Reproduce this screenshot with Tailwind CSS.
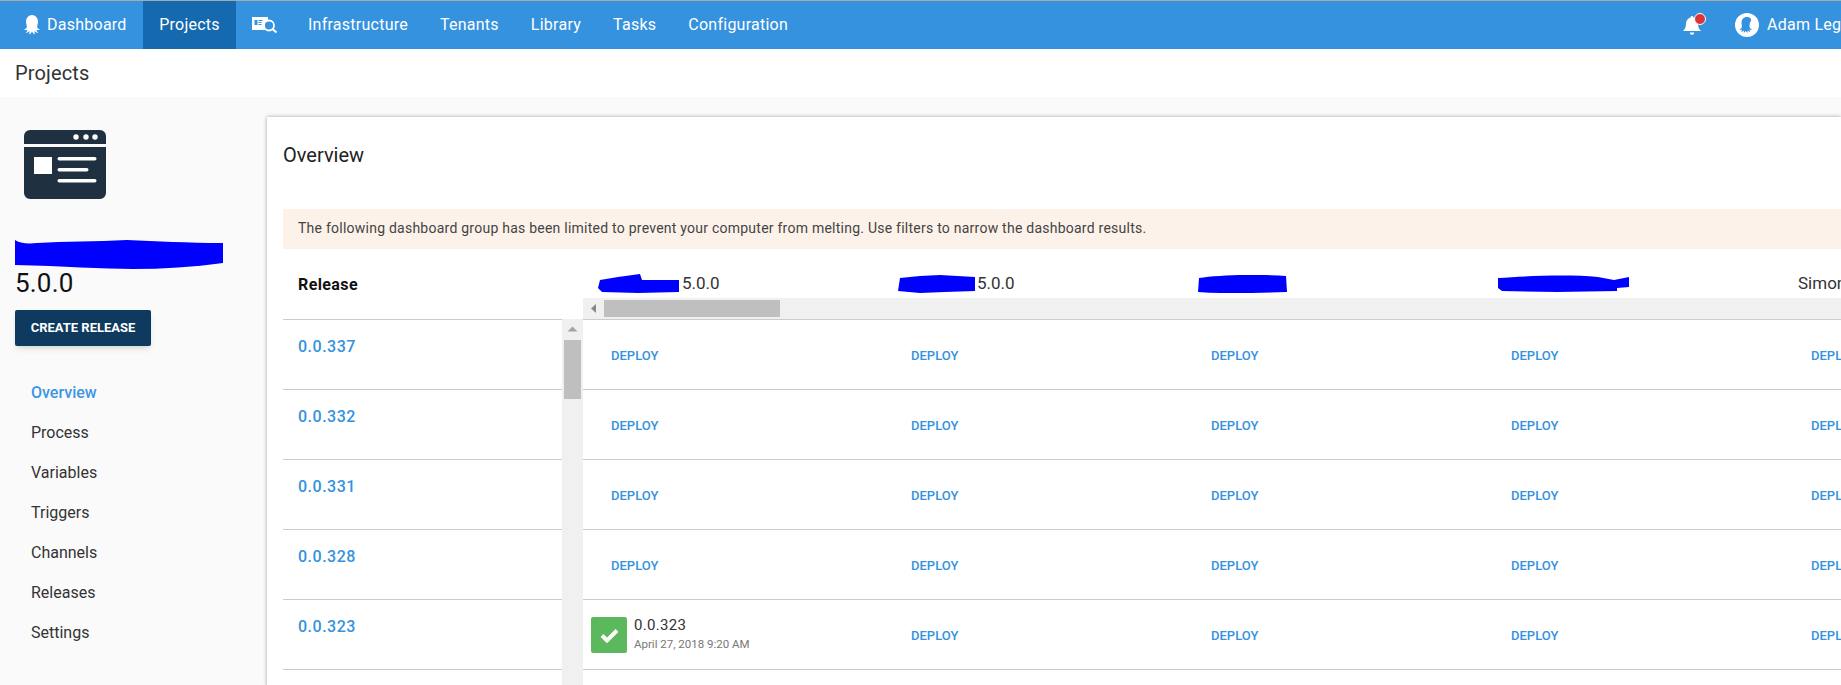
<!DOCTYPE html>
<html lang="en">
<head>
    <meta charset="UTF-8">
    <title>Projects</title>
    <script src="https://cdn.jsdelivr.net/npm/@tailwindcss/browser@4"></script>
</head>
<body class="w-[1841px] h-[685px] overflow-hidden bg-[#fafafa] font-['Roboto',sans-serif] text-[#333333]">

    <!-- Top nav -->
    <div class="h-px bg-[#a9a9a9]"></div>
    <nav class="h-12 bg-[#3592de] flex items-stretch text-white text-[16px] tracking-[0.25px] whitespace-nowrap">
        <a class="w-[143px] flex items-center pl-[24px]">
            <svg class="w-[16px] h-[20px] mr-[7px]" viewBox="0 0 16 20" fill="#fff"><path d="M8 0a6.200 6.200 0 0 0-6 6.500c0 2.300 1 3.800.8 5.500C2.600 13.400 1 14.300 0 14.500c1 .8 2.500.6 3.500 0-.2 1.300-1 2.800-1.700 3.500 1.300.1 2.800-.8 3.500-2.200.2 1.300.2 2.500-.3 3.700 1.100-.3 2.400-1.600 3-3 .6 1.400 1.900 2.700 3 3-.5-1.200-.5-2.400-.3-3.700.7 1.400 2.200 2.300 3.500 2.200-.7-.7-1.500-2.200-1.700-3.500 1 .6 2.500.8 3.500 0-1-.2-2.600-1.100-2.800-2.500-.2-1.700.8-3.200.8-5.500A6.200 6.200 0 0 0 8 0z"/></svg>
            Dashboard
        </a>
        <a class="w-[93px] flex items-center justify-center bg-[#1569ae]">Projects</a>
        <a class="w-[72px] flex items-center pl-[16px]">
            <svg class="w-[26px] h-[18px]" viewBox="0 0 26 18">
                <rect x="0" y="1" width="16" height="13" fill="#fff"/>
                <rect x="2.500" y="4" width="3" height="5" fill="#3592de"/>
                <path d="M6.500 4.500h4M6.500 6.500h3M6.500 8.500h3" stroke="#3592de" stroke-width="1.200"/>
                <circle cx="17" cy="9.500" r="5" fill="#3592de" stroke="#fff" stroke-width="1.800"/>
                <path d="M20.500 13l4 3.500" stroke="#fff" stroke-width="2.200"/>
            </svg>
        </a>
        <a class="flex items-center mr-[32px]">Infrastructure</a>
        <a class="flex items-center mr-[32px]">Tenants</a>
        <a class="flex items-center mr-[32px]">Library</a>
        <a class="flex items-center mr-[32px]">Tasks</a>
        <a class="flex items-center">Configuration</a>
        <div class="ml-auto flex items-center shrink-0">
            <div class="relative w-[20px] h-[24px] mr-[32px]">
                <svg class="w-[18px] h-[20px] absolute left-0 top-[3px]" viewBox="0 0 18 20" fill="#fff"><path d="M9 0a1.500 1.500 0 0 1 1.500 1.600C13 2.300 15 4.700 15 7.500c0 3.500.8 5.300 3 7.500H0c2.200-2.200 3-4 3-7.500 0-2.800 2-5.200 4.500-5.900A1.500 1.500 0 0 1 9 0zM6.800 16.500h4.400C11 18 10.100 18.800 9 18.800S7 18 6.800 16.500z"/></svg>
                <span class="absolute left-[11px] top-0 w-[10px] h-[10px] rounded-full bg-[#d9363a] border border-white box-content"></span>
            </div>
            <svg class="w-[24px] h-[24px] mr-[8px]" viewBox="0 0 24 24">
                <circle cx="12" cy="12" r="12" fill="#fff"/>
                <path d="M12 4c-3.600 0-5.500 2.700-5.500 5.500 0 2.200.7 3.300.2 5-.3 1-1.400 1.700-2.500 2 .8.600 1.900.5 2.800 0-.1.900-.5 1.700-1 2.300 1 .1 2.100-.5 2.700-1.500.2.900.2 1.700-.1 2.500.8-.2 1.700-1.100 2.100-2.100.4.900 1.300 1.900 2.100 2.100-.3-.8-.3-1.600-.1-2.500.6 1 1.700 1.600 2.700 1.500-.5-.6-.9-1.400-1-2.300.9.500 2 .6 2.800 0-1.100-.3-2.200-1-2.500-2-.5-1.700.2-2.800.2-5C17.500 6.700 15.600 4 12 4z" fill="#3592de"/>
            </svg>
            <span class="w-[74px] overflow-hidden">Adam Leggett</span>
        </div>
    </nav>

    <!-- Page title -->
    <div class="h-12 bg-white flex items-center pl-[15px] text-[20px] tracking-[0.15px] text-[#333333]">Projects</div>

    <div class="flex pt-[20px]">
        <!-- Sidebar -->
        <aside class="w-[267px] shrink-0 pl-[15px]">
            <svg class="w-[82px] h-[69px] ml-[9px] mt-[13px] block" viewBox="0 0 82 69">
                <path d="M6 0h70a6 6 0 0 1 6 6v8H0V6a6 6 0 0 1 6-6zM0 17h82v46a6 6 0 0 1-6 6H6a6 6 0 0 1-6-6z" fill="#1f3040"/>
                <circle cx="52" cy="7" r="2.700" fill="#fff"/><circle cx="62" cy="7" r="2.700" fill="#fff"/><circle cx="71" cy="7" r="2.700" fill="#fff"/>
                <rect x="10" y="27" width="18" height="17" fill="#fff"/>
                <rect x="33.500" y="27" width="39" height="3.500" rx="1.700" fill="#fff"/>
                <rect x="33.500" y="38" width="31" height="3.500" rx="1.700" fill="#fff"/>
                <rect x="33.500" y="49" width="39" height="3.500" rx="1.700" fill="#fff"/>
            </svg>
            <svg class="w-[208px] h-[29px] mt-[41px] block" viewBox="0 0 208 29" fill="#0000ff"><path d="M0 0c4 3 12 4 22 3C50 1 80 2 112 0c30 1 60 3 96 3l0 20c-30 4-60 6-90 6-30 0-70-3-118-4z"/></svg>
            <div class="text-[26px] leading-[28px] tracking-[0.2px] text-[#111111]">5.0.0</div>
            <button class="mt-[13px] w-[136px] h-[36px] bg-[#0d3a5e] rounded-[2px] shadow-md text-white text-[13px] font-bold">CREATE RELEASE</button>
            <ul class="mt-[27px] pl-[16px] text-[16px]">
                <li class="h-10 flex items-center font-medium text-[#3b96e4]">Overview</li>
                <li class="h-10 flex items-center">Process</li>
                <li class="h-10 flex items-center">Variables</li>
                <li class="h-10 flex items-center">Triggers</li>
                <li class="h-10 flex items-center">Channels</li>
                <li class="h-10 flex items-center">Releases</li>
                <li class="h-10 flex items-center">Settings</li>
            </ul>
        </aside>

        <!-- Main card -->
        <main class="flex-1 min-w-0 h-[570px] bg-white shadow-[0_0_4px_rgba(0,0,0,0.35)] pl-[16px] overflow-hidden">
            <h1 class="h-[76px] flex items-center text-[20px] font-normal text-[#222222]">Overview</h1>
            <div class="mt-[16px] h-[40px] bg-[#fdf2e9] flex items-center pl-[15px] pb-[2px] text-[14px] tracking-[0.24px] text-[#444444]">The following dashboard group has been limited to prevent your computer from melting. Use filters to narrow the dashboard results.</div>

            <!-- Header row -->
            <div class="flex h-[70px]">
                <div class="w-[300px] shrink-0 pl-[15px] pt-[25px] text-[16px] font-bold tracking-[0.4px] text-[#111111] leading-[22px]">Release</div>
                <div class="flex-1 min-w-0 overflow-hidden">
                    <div class="h-[49px] flex items-center pt-[20px] pl-[15px] text-[17px] whitespace-nowrap">
                        <div class="w-[300px] shrink-0 flex items-center">
                            <svg class="w-[81px] h-[19px] mr-[3px]" viewBox="0 0 81 19" fill="#0000ff"><path d="M2 6l18-3 22-3 2 6h37v12l-41 1-36-1-4-4z"/></svg>5.0.0
                        </div>
                        <div class="w-[300px] shrink-0 flex items-center">
                            <svg class="w-[77px] h-[19px] mr-[2px]" viewBox="0 0 77 19" fill="#0000ff"><path d="M2 4l20-2 20-1 35 2v14l-30 1-25 1L0 17z"/></svg>5.0.0
                        </div>
                        <div class="w-[300px] shrink-0">
                            <svg class="w-[89px] h-[18px]" viewBox="0 0 89 18" fill="#0000ff"><path d="M1 3C20 0 60-1 88 1l1 16c-30 1-60 2-89 0z"/></svg>
                        </div>
                        <div class="w-[300px] shrink-0">
                            <svg class="w-[131px] h-[17px]" viewBox="0 0 131 17" fill="#0000ff"><path d="M0 3C30 1 70-1 100 2l16 3 15-3v10l-12 1v3l-60 1-55-1-4-3z"/></svg>
                        </div>
                        <div class="shrink-0">Simon</div>
                    </div>
                    <!-- horizontal scrollbar -->
                    <div class="h-[21px] bg-[#f0f0f0] flex items-center">
                        <svg class="w-[21px] h-[21px] shrink-0" viewBox="0 0 21 21" fill="#888"><path d="M13 6v9l-5-4.500z"/></svg>
                        <div class="w-[176px] h-[17px] bg-[#bfbfbf]"></div>
                    </div>
                </div>
            </div>

            <!-- Rows, with a vertical scrollbar laid over the seam -->
            <div class="relative">
                <div class="absolute left-[279px] top-0 w-[21px] h-[366px] bg-[#f0f0f0]">
                    <svg class="w-[21px] h-[21px]" viewBox="0 0 21 21" fill="#a3a3a3"><path d="M10.500 7.500l5 5h-10z"/></svg>
                    <div class="w-[17px] h-[59px] ml-[2px] bg-[#bfbfbf]"></div>
                </div>

                <div class="flex h-[70px] border-t border-[#cccccc]">
                    <div class="w-[300px] shrink-0 pl-[15px] pt-[17px] text-[16px] font-medium text-[#3592de] leading-[20px] tracking-[0.5px]">0.0.337</div>
                    <div class="w-[300px] shrink-0 pl-[28px] pt-[29px] text-[13px] font-medium text-[#3592de] leading-[14px]">DEPLOY</div>
                    <div class="w-[300px] shrink-0 pl-[28px] pt-[29px] text-[13px] font-medium text-[#3592de] leading-[14px]">DEPLOY</div>
                    <div class="w-[300px] shrink-0 pl-[28px] pt-[29px] text-[13px] font-medium text-[#3592de] leading-[14px]">DEPLOY</div>
                    <div class="w-[300px] shrink-0 pl-[28px] pt-[29px] text-[13px] font-medium text-[#3592de] leading-[14px]">DEPLOY</div>
                    <div class="w-[300px] shrink-0 pl-[28px] pt-[29px] text-[13px] font-medium text-[#3592de] leading-[14px]">DEPLOY</div>
                </div>
                <div class="flex h-[70px] border-t border-[#cccccc]">
                    <div class="w-[300px] shrink-0 pl-[15px] pt-[17px] text-[16px] font-medium text-[#3592de] leading-[20px] tracking-[0.5px]">0.0.332</div>
                    <div class="w-[300px] shrink-0 pl-[28px] pt-[29px] text-[13px] font-medium text-[#3592de] leading-[14px]">DEPLOY</div>
                    <div class="w-[300px] shrink-0 pl-[28px] pt-[29px] text-[13px] font-medium text-[#3592de] leading-[14px]">DEPLOY</div>
                    <div class="w-[300px] shrink-0 pl-[28px] pt-[29px] text-[13px] font-medium text-[#3592de] leading-[14px]">DEPLOY</div>
                    <div class="w-[300px] shrink-0 pl-[28px] pt-[29px] text-[13px] font-medium text-[#3592de] leading-[14px]">DEPLOY</div>
                    <div class="w-[300px] shrink-0 pl-[28px] pt-[29px] text-[13px] font-medium text-[#3592de] leading-[14px]">DEPLOY</div>
                </div>
                <div class="flex h-[70px] border-t border-[#cccccc]">
                    <div class="w-[300px] shrink-0 pl-[15px] pt-[17px] text-[16px] font-medium text-[#3592de] leading-[20px] tracking-[0.5px]">0.0.331</div>
                    <div class="w-[300px] shrink-0 pl-[28px] pt-[29px] text-[13px] font-medium text-[#3592de] leading-[14px]">DEPLOY</div>
                    <div class="w-[300px] shrink-0 pl-[28px] pt-[29px] text-[13px] font-medium text-[#3592de] leading-[14px]">DEPLOY</div>
                    <div class="w-[300px] shrink-0 pl-[28px] pt-[29px] text-[13px] font-medium text-[#3592de] leading-[14px]">DEPLOY</div>
                    <div class="w-[300px] shrink-0 pl-[28px] pt-[29px] text-[13px] font-medium text-[#3592de] leading-[14px]">DEPLOY</div>
                    <div class="w-[300px] shrink-0 pl-[28px] pt-[29px] text-[13px] font-medium text-[#3592de] leading-[14px]">DEPLOY</div>
                </div>
                <div class="flex h-[70px] border-t border-[#cccccc]">
                    <div class="w-[300px] shrink-0 pl-[15px] pt-[17px] text-[16px] font-medium text-[#3592de] leading-[20px] tracking-[0.5px]">0.0.328</div>
                    <div class="w-[300px] shrink-0 pl-[28px] pt-[29px] text-[13px] font-medium text-[#3592de] leading-[14px]">DEPLOY</div>
                    <div class="w-[300px] shrink-0 pl-[28px] pt-[29px] text-[13px] font-medium text-[#3592de] leading-[14px]">DEPLOY</div>
                    <div class="w-[300px] shrink-0 pl-[28px] pt-[29px] text-[13px] font-medium text-[#3592de] leading-[14px]">DEPLOY</div>
                    <div class="w-[300px] shrink-0 pl-[28px] pt-[29px] text-[13px] font-medium text-[#3592de] leading-[14px]">DEPLOY</div>
                    <div class="w-[300px] shrink-0 pl-[28px] pt-[29px] text-[13px] font-medium text-[#3592de] leading-[14px]">DEPLOY</div>
                </div>
                <div class="flex h-[71px] border-t border-b border-[#cccccc]">
                    <div class="w-[300px] shrink-0 pl-[15px] pt-[17px] text-[16px] font-medium text-[#3592de] leading-[20px] tracking-[0.5px]">0.0.323</div>
                    <div class="w-[300px] shrink-0 pl-[8px] pt-[17px] flex items-start">
                        <span class="w-[36px] h-[36px] rounded-[2px] bg-[#5cb85c] flex items-center justify-center mr-[7px]">
                            <svg class="w-[19px] h-[15px]" viewBox="0 0 19 15" fill="none" stroke="#fff" stroke-width="4"><path d="M2 7.500l5 5 10-10"/></svg>
                        </span>
                        <span>
                            <span class="block text-[15px] leading-[16px] tracking-[0.3px] text-[#333333]">0.0.323</span>
                            <span class="block mt-[4px] text-[11.5px] leading-[14px] text-[#777777]">April 27, 2018 9:20 AM</span>
                        </span>
                    </div>
                    <div class="w-[300px] shrink-0 pl-[28px] pt-[29px] text-[13px] font-medium text-[#3592de] leading-[14px]">DEPLOY</div>
                    <div class="w-[300px] shrink-0 pl-[28px] pt-[29px] text-[13px] font-medium text-[#3592de] leading-[14px]">DEPLOY</div>
                    <div class="w-[300px] shrink-0 pl-[28px] pt-[29px] text-[13px] font-medium text-[#3592de] leading-[14px]">DEPLOY</div>
                    <div class="w-[300px] shrink-0 pl-[28px] pt-[29px] text-[13px] font-medium text-[#3592de] leading-[14px]">DEPLOY</div>
                </div>
            </div>
        </main>
    </div>
</body>
</html>
